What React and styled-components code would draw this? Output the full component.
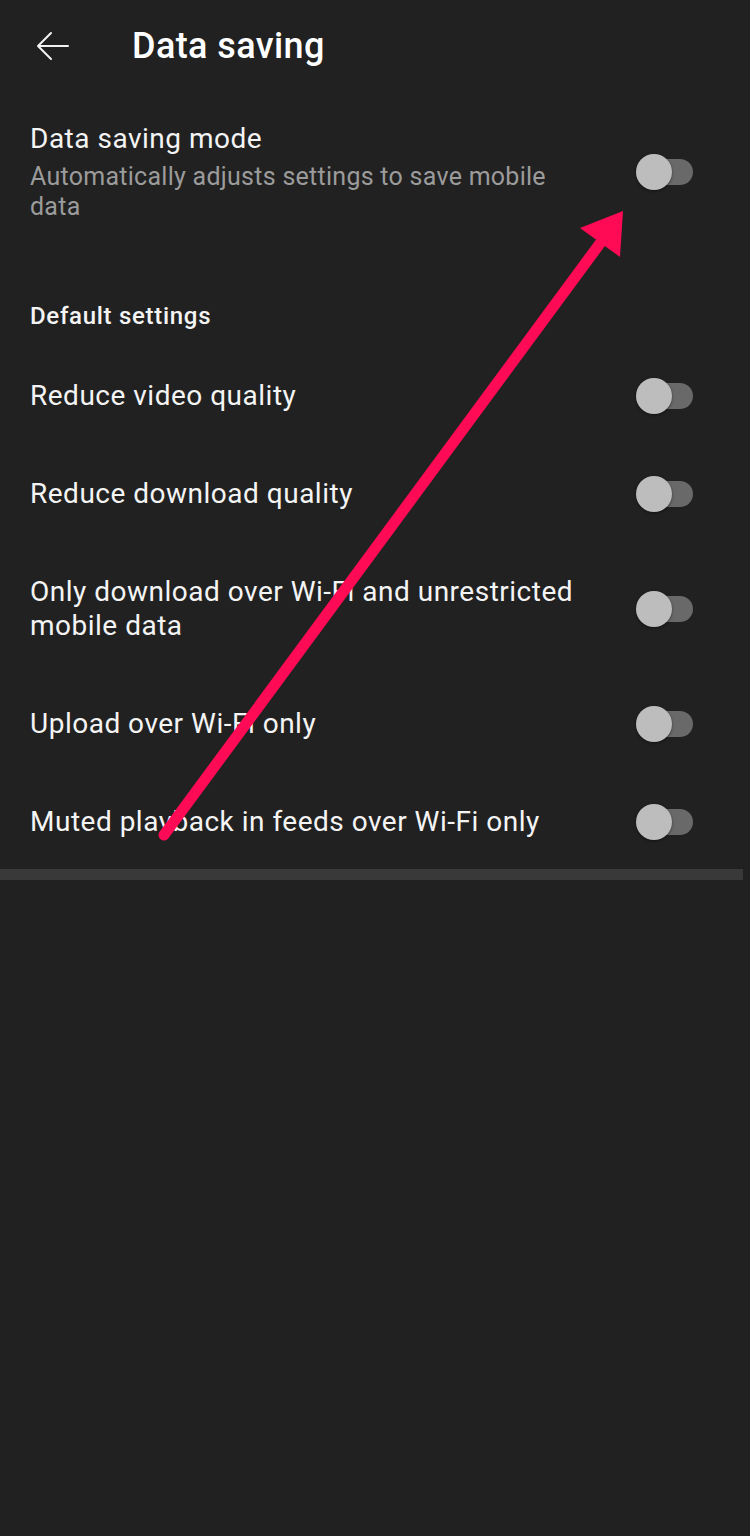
import React from 'react';
import styled, { createGlobalStyle } from 'styled-components';

const GlobalStyle = createGlobalStyle`
  html, body {
    margin: 0;
    padding: 0;
    background: #212121;
  }

  body {
    font-family: Roboto, "Noto Sans", "Liberation Sans", sans-serif;
    color: #f2f2f2;
    -webkit-font-smoothing: antialiased;
  }
`;

const Screen = styled.main`
  position: relative;
  width: 750px;
  min-height: 1536px;
  background: #212121;
  overflow: hidden;
`;

const Header = styled.header`
  display: flex;
  align-items: center;
  height: 92px;
  padding: 0 0 0 36px;
  box-sizing: border-box;
`;

const BackButton = styled.button`
  display: flex;
  align-items: center;
  justify-content: center;
  width: 33px;
  height: 30px;
  padding: 0;
  margin: 0 63px 0 0;
  border: none;
  background: none;
  color: #f2f2f2;
  cursor: pointer;
`;

const Title = styled.h1`
  margin: 0;
  font-size: 36px;
  font-weight: 500;
  line-height: 40px;
  letter-spacing: 0.4px;
  color: #ffffff;
`;

const SettingRow = styled.div`
  display: flex;
  align-items: center;
  justify-content: space-between;
  gap: 46px;
  padding: ${({ $tall }) => ($tall ? '32px 57px 32px 30px' : '31px 57px 31px 30px')};
`;

const ModeRow = styled(SettingRow)`
  padding: 30px 57px 79px 30px;
`;

const RowText = styled.div`
  display: flex;
  flex-direction: column;
  flex: 1;
  min-width: 0;
`;

const Label = styled.span`
  font-size: 28px;
  line-height: 34px;
  letter-spacing: 0.5px;
  color: #f4f4f4;
`;

const Description = styled.span`
  font-size: 25px;
  line-height: 30px;
  letter-spacing: 0.27px;
  color: #9b9b9b;
  margin-top: 6px;
`;

const SectionTitle = styled.h2`
  margin: 0;
  padding: 0 30px 16px;
  font-size: 24px;
  font-weight: 500;
  line-height: 30px;
  letter-spacing: 0.7px;
  color: #f4f4f4;
`;

const Switch = styled.span`
  position: relative;
  flex: none;
  width: 57px;
  height: 36px;

  &::before {
    content: '';
    position: absolute;
    left: 6px;
    right: 0;
    top: 5px;
    height: 26px;
    border-radius: 13px;
    background: #696969;
  }

  &::after {
    content: '';
    position: absolute;
    left: 0;
    top: 0;
    width: 36px;
    height: 36px;
    border-radius: 50%;
    background: ${({ $on }) => ($on ? '#ff0a55' : '#bdbdbd')};
    box-shadow: 0 1px 3px rgba(0, 0, 0, 0.45);
  }
`;

const Divider = styled.div`
  width: 743px;
  height: 11px;
  margin-top: -2px;
  background: #393939;
`;

const Annotation = styled.svg`
  position: absolute;
  left: 0;
  top: 0;
  width: 750px;
  height: 1536px;
  pointer-events: none;
`;

const defaults = [
  { label: 'Reduce video quality' },
  { label: 'Reduce download quality' },
  { label: 'Only download over Wi-Fi and unrestricted mobile data', tall: true },
  { label: 'Upload over Wi-Fi only' },
  { label: 'Muted playback in feeds over Wi-Fi only' },
];

function BackArrow() {
  return (
    <svg width="33" height="30" viewBox="0 0 33 30" fill="none">
      <path
        d="M32 15H2M15 2L2 15l13 13"
        stroke="currentColor"
        strokeWidth="2"
        strokeLinecap="round"
        strokeLinejoin="round"
      />
    </svg>
  );
}

export default function App() {
  return (
    <Screen>
      <GlobalStyle />
      <Header>
        <BackButton aria-label="Back">
          <BackArrow />
        </BackButton>
        <Title>Data saving</Title>
      </Header>

      <ModeRow>
        <RowText>
          <Label>Data saving mode</Label>
          <Description>Automatically adjusts settings to save mobile data</Description>
        </RowText>
        <Switch />
      </ModeRow>

      <SectionTitle>Default settings</SectionTitle>

      {defaults.map((item) => (
        <SettingRow key={item.label} $tall={item.tall}>
          <RowText>
            <Label>{item.label}</Label>
          </RowText>
          <Switch />
        </SettingRow>
      ))}

      <Divider />

      <Annotation viewBox="0 0 750 1536">
        <line
          x1="164"
          y1="835"
          x2="604"
          y2="238"
          stroke="#ff0a55"
          strokeWidth="11"
          strokeLinecap="round"
        />
        <polygon points="623,211 580,228 620,257" fill="#ff0a55" />
      </Annotation>
    </Screen>
  );
}
